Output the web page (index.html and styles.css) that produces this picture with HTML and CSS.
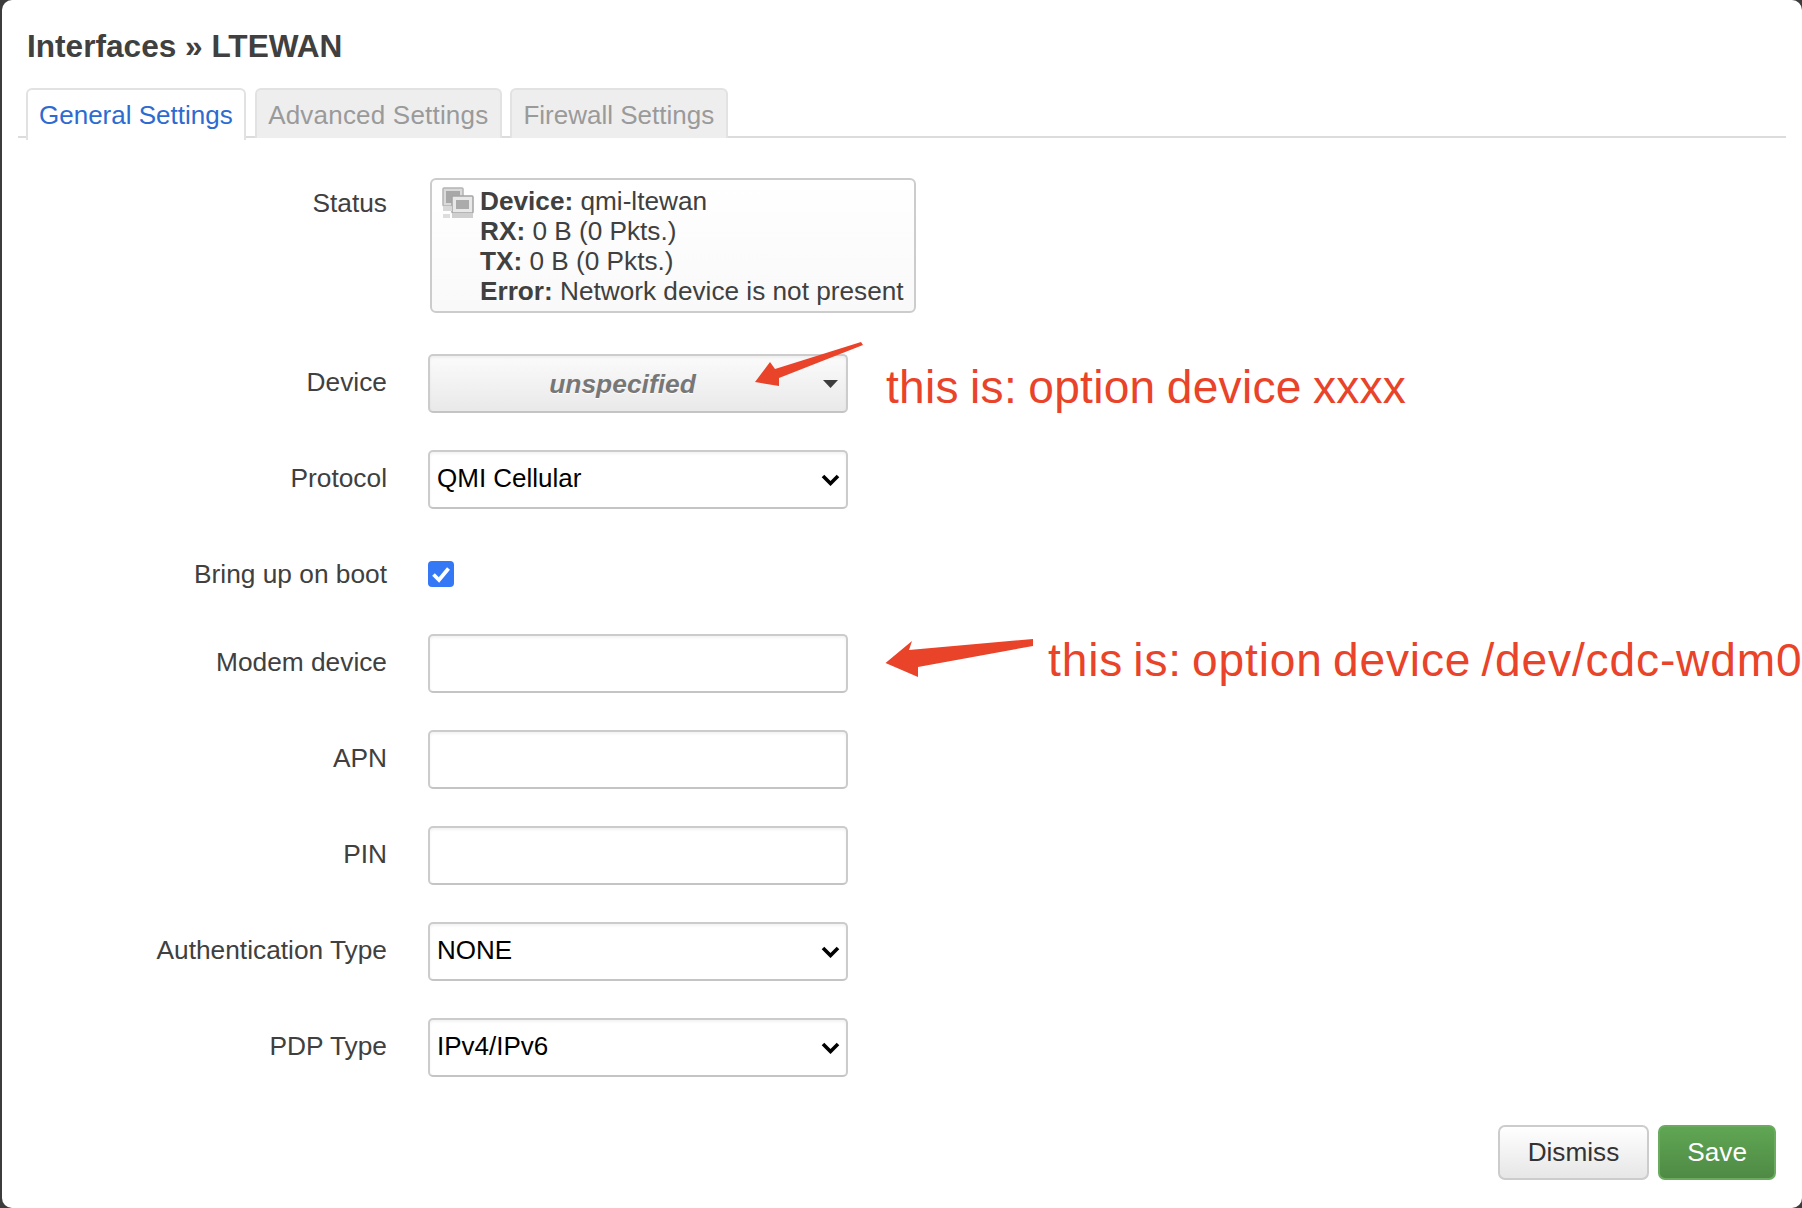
FILE: index.html
```html
<!DOCTYPE html>
<html lang="en">
<head>
  <meta charset="UTF-8" />
  <title>Interfaces » LTEWAN</title>
  <link rel="stylesheet" href="styles.css">
</head>
<body>

  <div class="modal">
    <h2>Interfaces » LTEWAN</h2>

    <ul class="tabs">
      <li class="tab active">General Settings</li>
      <li class="tab tab-wide">Advanced Settings</li>
      <li class="tab">Firewall Settings</li>
    </ul>

    <div class="form">
      <div class="row row-status">
        <label class="row-label">Status</label>
        <div class="status-box">
          <svg class="status-icon" width="32" height="32" viewBox="0 0 32 32">
            <rect x="1" y="1" width="20" height="18" rx="1" fill="#dadada" stroke="#b4b4b4" stroke-width="1.5"/>
            <rect x="4" y="4" width="14" height="12" fill="#a8a8a8"/>
            <rect x="10" y="9" width="21" height="17" rx="1" fill="#e8e8e8" stroke="#a4a4a4" stroke-width="1.5"/>
            <rect x="14" y="13" width="13" height="9" fill="#ababab"/>
            <rect x="1" y="19" width="9" height="5" fill="#d8d8d8"/>
            <rect x="10" y="26" width="21" height="5" fill="#cfcfcf"/>
            <rect x="1" y="27" width="7" height="4" fill="#dddddd"/>
          </svg>
          <div class="status-text">
            <div><strong>Device:</strong> qmi-ltewan</div>
            <div><strong>RX:</strong> 0 B (0 Pkts.)</div>
            <div><strong>TX:</strong> 0 B (0 Pkts.)</div>
            <div><strong>Error:</strong> Network device is not present</div>
          </div>
        </div>
      </div>

      <div class="row">
        <label class="row-label">Device</label>
        <div class="dropdown">
          <span class="dropdown-value">unspecified</span>
          <svg class="dropdown-caret" width="15" height="8" viewBox="0 0 15 8"><path d="M0 0H15L7.5 8Z" fill="#3d3d3d"/></svg>
        </div>
        <span class="note note-first">this is: option device xxxx</span>
      </div>

      <div class="row">
        <label class="row-label">Protocol</label>
        <select class="field select"><option>QMI Cellular</option></select>
      </div>

      <div class="row row-check">
        <label class="row-label">Bring up on boot</label>
        <input class="check" type="checkbox" checked>
      </div>

      <div class="row">
        <label class="row-label">Modem device</label>
        <input class="field" type="text">
        <span class="note note-second">this is: option device /dev/cdc-wdm0</span>
      </div>

      <div class="row">
        <label class="row-label">APN</label>
        <input class="field" type="text">
      </div>

      <div class="row">
        <label class="row-label">PIN</label>
        <input class="field" type="text">
      </div>

      <div class="row">
        <label class="row-label">Authentication Type</label>
        <select class="field select"><option>NONE</option></select>
      </div>

      <div class="row">
        <label class="row-label">PDP Type</label>
        <select class="field select"><option>IPv4/IPv6</option></select>
      </div>
    </div>

    <div class="actions">
      <button class="btn">Dismiss</button>
      <button class="btn btn-save">Save</button>
    </div>

    <!-- Red arrows drawn over the screenshot -->
    <svg class="arrow arrow-first" width="112" height="48" viewBox="0 0 112 48">
      <path d="M2 40L17 20L22 27L108 0L110 3L26 36L26 44Z" fill="#e9432a"/>
    </svg>
    <svg class="arrow arrow-second" width="150" height="40" viewBox="0 0 150 40">
      <path d="M0.5 24L27 2L24 11L148 0L148 7L33 28L33 38Z" fill="#e9432a"/>
    </svg>
  </div>

</body>
</html>
```

FILE: styles.css
```css
* {
  margin: 0;
  padding: 0;
  box-sizing: border-box;
}

html, body {
  height: 100%;
  overflow: hidden;
  font-family: 'Liberation Sans', Arial, sans-serif;
}

body {
  background: #3c3c3c;
  padding-left: 2px;
}

.modal {
  position: relative;
  height: 1208px;
  background: #fff;
  border-radius: 10px;
  overflow: hidden;
  padding: 28px 16px 0 16px;
  color: #404040;
}

h2 {
  font-size: 31.6px;
  line-height: 36px;
  font-weight: bold;
  color: #404040;
  margin-left: 9px;
}

.tabs {
  display: flex;
  list-style: none;
  gap: 8px;
  margin-top: 24px;
  padding-left: 8px;
  height: 50px;
  border-bottom: 2px solid #dcdcdc;
}

.tab {
  height: 50px;
  padding: 10px 11.5px 0;
  font-size: 26px;
  line-height: 30px;
  color: #9a9a9a;
  background: #eee;
  border: 2px solid #e2e2e2;
  border-bottom: none;
  border-radius: 6px 6px 0 0;
}

.tab-wide {
  margin-left: 1px;
  letter-spacing: 0.2px;
}

.tab.active {
  color: #2d6bd0;
  background: #fff;
  position: relative;
  z-index: 1;
  height: 52px;
  padding: 10px 11px 0;
}

.form {
  margin-top: 40px;
  display: flex;
  flex-direction: column;
  gap: 37px;
}

.row {
  display: flex;
  align-items: center;
  height: 59px;
}

.row-status {
  height: 135px;
  align-items: flex-start;
  margin-bottom: 4px;
}

.row-status .row-label {
  margin-top: 10px;
  margin-bottom: 0;
}

.row-check {
  margin-top: -2px;
  margin-bottom: -6px;
}

.row-check .row-label {
  margin-bottom: 0;
}

.row-label {
  width: 369px;
  flex: none;
  margin-right: 41px;
  margin-bottom: 3px;
  text-align: right;
  font-size: 26.3px;
  line-height: 30px;
  color: #404040;
}

.status-box {
  width: 486px;
  height: 135px;
  margin-left: 2px;
  padding: 6px 8px 0 10px;
  display: flex;
  gap: 6px;
  border: 2px solid #ccc;
  border-radius: 6px;
  background: linear-gradient(#fff, #f9f9f9);
  font-size: 26.2px;
  line-height: 30px;
  white-space: nowrap;
}

.status-icon {
  flex: none;
  margin-top: 1px;
}

.field,
.dropdown {
  width: 420px;
  height: 59px;
  flex: none;
  border: 2px solid #ccc;
  border-bottom-color: #c4c4c4;
  border-radius: 5px;
  background: #fff;
  box-shadow: inset 0 2px 3px rgba(0, 0, 0, 0.05);
  font-family: inherit;
  font-size: 26px;
  color: #000;
  outline: none;
}

.select {
  appearance: none;
  padding-left: 7px;
  padding-bottom: 3px;
  background: #fff url("data:image/svg+xml;utf8,<svg xmlns='http://www.w3.org/2000/svg' width='19' height='12' viewBox='0 0 19 12'><path d='M2 2L9.5 9.5L17 2' fill='none' stroke='black' stroke-width='3.6'/></svg>") no-repeat right 6px center;
}

.dropdown {
  display: flex;
  align-items: center;
  padding-right: 8px;
  background: linear-gradient(#fbfbfb, #e9e9e9);
}

.dropdown-value {
  flex: 1;
  text-align: center;
  padding-right: 8px;
  padding-top: 2px;
  font-size: 26.4px;
  font-weight: bold;
  font-style: italic;
  color: #777;
  text-shadow: 0 1px 1px #fff;
}

.check {
  appearance: none;
  width: 26px;
  height: 26px;
  border-radius: 4px;
  background: #3478f6 url("data:image/svg+xml;utf8,<svg xmlns='http://www.w3.org/2000/svg' width='26' height='26' viewBox='0 0 26 26'><path d='M5.5 13.5L11 19L20.5 7.5' fill='none' stroke='white' stroke-width='3.8'/></svg>") no-repeat center;
}

.note {
  flex: none;
  white-space: nowrap;
  font-size: 46.1px;
  color: #e9432a;
}

.note-first {
  margin-left: 38px;
  margin-top: 6px;
  word-spacing: -1.8px;
  letter-spacing: 0.27px;
}

.note-second {
  margin-left: 200px;
  margin-top: -8px;
  word-spacing: -3.5px;
  letter-spacing: 0.85px;
}

.actions {
  display: flex;
  justify-content: flex-end;
  gap: 9px;
  margin-top: 48px;
  padding-right: 10px;
}

.btn {
  height: 55px;
  padding: 0 28px;
  border: 2px solid #ccc;
  border-radius: 7px;
  background: linear-gradient(#fff, #e6e6e6);
  font-family: inherit;
  font-size: 26.2px;
  color: #333;
}

.btn-save {
  padding: 0 27px;
  border-color: #6aab5f;
  background: linear-gradient(#5fa653, #4f8a45);
  color: #fff;
}

.arrow {
  position: absolute;
}

.arrow-first {
  left: 751px;
  top: 342px;
}

.arrow-second {
  left: 883px;
  top: 639px;
}
```
